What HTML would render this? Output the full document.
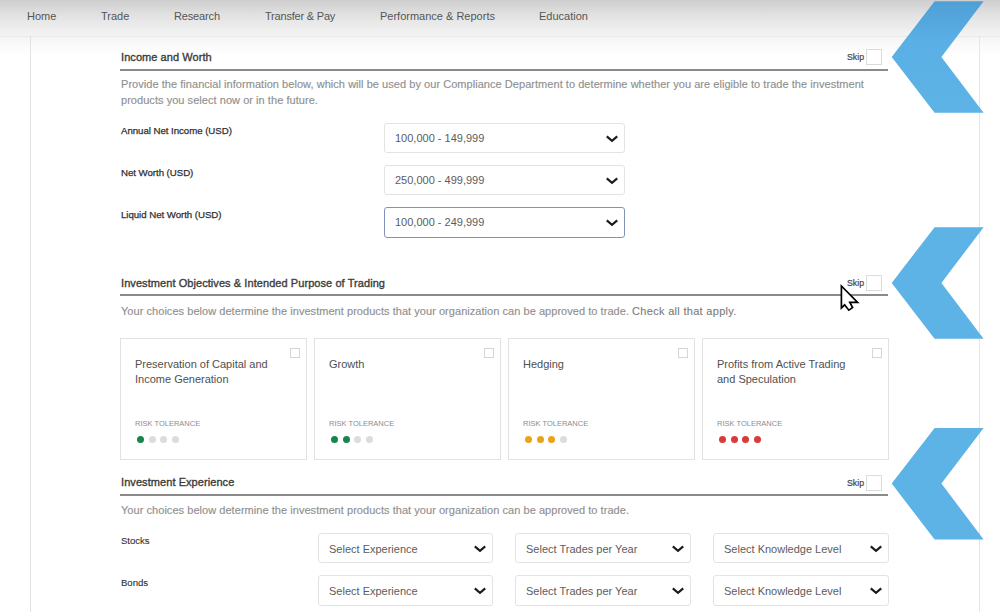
<!DOCTYPE html>
<html><head><meta charset="utf-8">
<style>
*{box-sizing:border-box;margin:0;padding:0}
html,body{width:1000px;height:612px;overflow:hidden;background:#fff;font-family:"Liberation Sans",sans-serif;color:#333}
.abs{position:absolute}
#nav{left:0;top:0;width:1000px;height:37px;background:linear-gradient(#cecece,#e3e3e3 45%,#f4f4f4);border-bottom:1px solid #e9e9e9}
#shadow{left:0;top:37px;width:1000px;height:18px;background:linear-gradient(#f5f5f5,#fff)}
#nav span{position:absolute;top:10px;font-size:11px;color:#555;line-height:13px;white-space:nowrap}
#leftbg{left:30px;top:36px;width:1px;height:576px;background:#e3e3e3}
#rightline{left:979px;top:36px;width:1px;height:577px;background:#e6e6e6}
.h{position:absolute;left:121px;font-size:11px;font-weight:400;letter-spacing:0.07px;color:#3c3c3c;-webkit-text-stroke:0.35px #3c3c3c;white-space:nowrap;line-height:12px}
.ul{position:absolute;left:120px;width:768px;height:2px;background:#8a8a8a;box-shadow:0 0 0.6px #bbb}
.desc{position:absolute;left:121px;font-size:11px;letter-spacing:0.045px;color:#909090;-webkit-text-stroke:0.15px #909090;line-height:16px;white-space:nowrap}
.skip{position:absolute;left:847px;font-size:8.8px;color:#474452;font-weight:400;-webkit-text-stroke:0.2px #474452;white-space:nowrap;line-height:10px}
.skbox{position:absolute;left:866px;width:16px;height:16px;border:1px solid #dcdcdc;background:#fff}
.lbl{position:absolute;left:121px;font-size:9.7px;letter-spacing:-0.05px;color:#2f2f2f;-webkit-text-stroke:0.25px #2f2f2f;white-space:nowrap;line-height:12px}
.sel{position:absolute;height:30px;border:1px solid #e3e3e3;border-radius:3px;background:#fff;font-size:11px;color:#5c5c5c;line-height:28px;padding-left:10px;white-space:nowrap}
.sel svg{position:absolute;right:5.5px;top:11px}
.card{position:absolute;top:338px;width:187px;height:122px;border:1px solid #e2e2e2;background:#fff}
.card .t{position:absolute;left:14px;top:17.5px;font-size:11px;color:#505050;line-height:15.7px;white-space:nowrap}
.card .cb{position:absolute;left:168.5px;top:9px;width:10px;height:10px;border:1px solid #d6d6d6}
.card .rt{position:absolute;left:14px;top:80px;font-size:7.5px;color:#8c8c8c;line-height:9px;white-space:nowrap}
.card .dots{position:absolute;left:16px;top:97px}
.card .dots i{position:absolute;top:0;width:7px;height:7px;border-radius:50%;background:#dcdcdc}
.chev{position:absolute}
</style></head><body>
<div id="nav" class="abs">
<span style="left:27px">Home</span>
<span style="left:101px">Trade</span>
<span style="left:174px;letter-spacing:-0.15px">Research</span>
<span style="left:265px;letter-spacing:-0.2px">Transfer &amp; Pay</span>
<span style="left:380px">Performance &amp; Reports</span>
<span style="left:539px">Education</span>
</div>
<div id="shadow" class="abs"></div>
<div id="leftbg" class="abs"></div>
<div id="rightline" class="abs"></div>

<!-- Section 1 -->
<div class="h" style="top:51px">Income and Worth</div>
<div class="skip" style="top:52px">Skip</div>
<div class="skbox" style="top:49px"></div>
<div class="ul" style="top:69px"></div>
<div class="desc" style="top:76px">Provide the financial information below, which will be used by our Compliance Department to determine whether you are eligible to trade the investment<br>products you select now or in the future.</div>
<div class="lbl" style="top:125px">Annual Net Income (USD)</div>
<div class="lbl" style="top:167px">Net Worth (USD)</div>
<div class="lbl" style="top:209px">Liquid Net Worth (USD)</div>
<div class="sel" style="left:384px;top:123.2px;height:30.3px;width:241px">100,000 - 149,999<svg width="14" height="8" viewBox="0 0 14 8"><path d="M1.8 1.4 L7 5.9 L12.2 1.4" fill="none" stroke="#1a1a1a" stroke-width="2.1"/></svg></div>
<div class="sel" style="left:384px;top:165.2px;height:30.3px;width:241px">250,000 - 499,999<svg width="14" height="8" viewBox="0 0 14 8"><path d="M1.8 1.4 L7 5.9 L12.2 1.4" fill="none" stroke="#1a1a1a" stroke-width="2.1"/></svg></div>
<div class="sel" style="left:384px;top:206.8px;height:30.8px;line-height:29px;width:241px;border:1.4px solid #8094bb">100,000 - 249,999<svg width="14" height="8" viewBox="0 0 14 8"><path d="M1.8 1.4 L7 5.9 L12.2 1.4" fill="none" stroke="#1a1a1a" stroke-width="2.1"/></svg></div>

<!-- Section 2 -->
<div class="h" style="top:276.6px">Investment Objectives &amp; Intended Purpose of Trading</div>
<div class="skip" style="top:278px">Skip</div>
<div class="skbox" style="top:275px"></div>
<div class="ul" style="top:294px"></div>
<div class="desc" style="top:303px">Your choices below determine the investment products that your organization can be approved to trade. <span style="color:#7c7c7c;-webkit-text-stroke:0.12px #7c7c7c;letter-spacing:0.3px">Check all that apply.</span></div>

<div class="card" style="left:120px"><div class="t">Preservation of Capital and<br>Income Generation</div><div class="cb"></div><div class="rt">RISK TOLERANCE</div>
<div class="dots"><i style="left:0;background:#17864d"></i><i style="left:11.5px"></i><i style="left:23px"></i><i style="left:34.5px"></i></div></div>
<div class="card" style="left:314px"><div class="t">Growth</div><div class="cb"></div><div class="rt">RISK TOLERANCE</div>
<div class="dots"><i style="left:0;background:#17864d"></i><i style="left:11.5px;background:#17864d"></i><i style="left:23px"></i><i style="left:34.5px"></i></div></div>
<div class="card" style="left:508px"><div class="t">Hedging</div><div class="cb"></div><div class="rt">RISK TOLERANCE</div>
<div class="dots"><i style="left:0;background:#eaa21a"></i><i style="left:11.5px;background:#eaa21a"></i><i style="left:23px;background:#eaa21a"></i><i style="left:34.5px"></i></div></div>
<div class="card" style="left:702px"><div class="t">Profits from Active Trading<br>and Speculation</div><div class="cb"></div><div class="rt">RISK TOLERANCE</div>
<div class="dots"><i style="left:0;background:#d93a3a"></i><i style="left:11.5px;background:#d93a3a"></i><i style="left:23px;background:#d93a3a"></i><i style="left:34.5px;background:#d93a3a"></i></div></div>

<!-- Section 3 -->
<div class="h" style="top:475.6px">Investment Experience</div>
<div class="skip" style="top:478px">Skip</div>
<div class="skbox" style="top:475px"></div>
<div class="ul" style="top:494px"></div>
<div class="desc" style="top:502px">Your choices below determine the investment products that your organization can be approved to trade.</div>
<div class="lbl" style="top:535px;-webkit-text-stroke:0.1px #333;font-size:9.6px">Stocks</div>
<div class="lbl" style="top:577px;-webkit-text-stroke:0.1px #333;font-size:9.6px">Bonds</div>
<div class="sel" style="left:318px;top:532.7px;height:30.6px;line-height:30px;width:175px">Select Experience<svg width="14" height="8" viewBox="0 0 14 8"><path d="M1.8 1.4 L7 5.9 L12.2 1.4" fill="none" stroke="#1a1a1a" stroke-width="2.1"/></svg></div>
<div class="sel" style="left:515px;top:532.7px;height:30.6px;line-height:30px;width:176px">Select Trades per Year<svg width="14" height="8" viewBox="0 0 14 8"><path d="M1.8 1.4 L7 5.9 L12.2 1.4" fill="none" stroke="#1a1a1a" stroke-width="2.1"/></svg></div>
<div class="sel" style="left:713px;top:532.7px;height:30.6px;line-height:30px;width:176px">Select Knowledge Level<svg width="14" height="8" viewBox="0 0 14 8"><path d="M1.8 1.4 L7 5.9 L12.2 1.4" fill="none" stroke="#1a1a1a" stroke-width="2.1"/></svg></div>
<div class="sel" style="left:318px;top:575.2px;height:30.4px;line-height:30px;width:175px">Select Experience<svg width="14" height="8" viewBox="0 0 14 8"><path d="M1.8 1.4 L7 5.9 L12.2 1.4" fill="none" stroke="#1a1a1a" stroke-width="2.1"/></svg></div>
<div class="sel" style="left:515px;top:575.2px;height:30.4px;line-height:30px;width:176px">Select Trades per Year<svg width="14" height="8" viewBox="0 0 14 8"><path d="M1.8 1.4 L7 5.9 L12.2 1.4" fill="none" stroke="#1a1a1a" stroke-width="2.1"/></svg></div>
<div class="sel" style="left:713px;top:575.2px;height:30.4px;line-height:30px;width:176px">Select Knowledge Level<svg width="14" height="8" viewBox="0 0 14 8"><path d="M1.8 1.4 L7 5.9 L12.2 1.4" fill="none" stroke="#1a1a1a" stroke-width="2.1"/></svg></div>

<!-- Chevrons -->
<svg class="chev" style="left:0;top:0" width="1000" height="612" viewBox="0 0 1000 612">
<defs><linearGradient id="g1" x1="0" y1="0" x2="0" y2="1"><stop offset="0" stop-color="#4e9fd6"/><stop offset="0.35" stop-color="#5aafe4"/><stop offset="1" stop-color="#5db2e6"/></linearGradient></defs>
<polygon points="934.6,1.2 983.6,1.2 941.4,56.9 983.6,112.7 934.6,112.7 891.7,56.9" fill="url(#g1)"/>
<polygon points="934.6,227.2 983.6,227.2 941.4,282.9 983.6,338.7 934.6,338.7 891.7,282.9" fill="#5db2e6"/>
<polygon points="934.6,427.9 983.6,427.9 941.4,483.6 983.6,539.4 934.6,539.4 891.7,483.6" fill="#5db2e6"/>
</svg>
<svg class="chev" style="left:0;top:0" width="1000" height="612" viewBox="0 0 1000 612">
<polygon points="841.4,286 841.4,308 844.6,304.8 848.8,310.2 852.6,307.6 849.8,302.4 857.6,302.4" fill="#fff" stroke="#000" stroke-width="1.7" stroke-linejoin="miter"/>
</svg>
</body></html>
